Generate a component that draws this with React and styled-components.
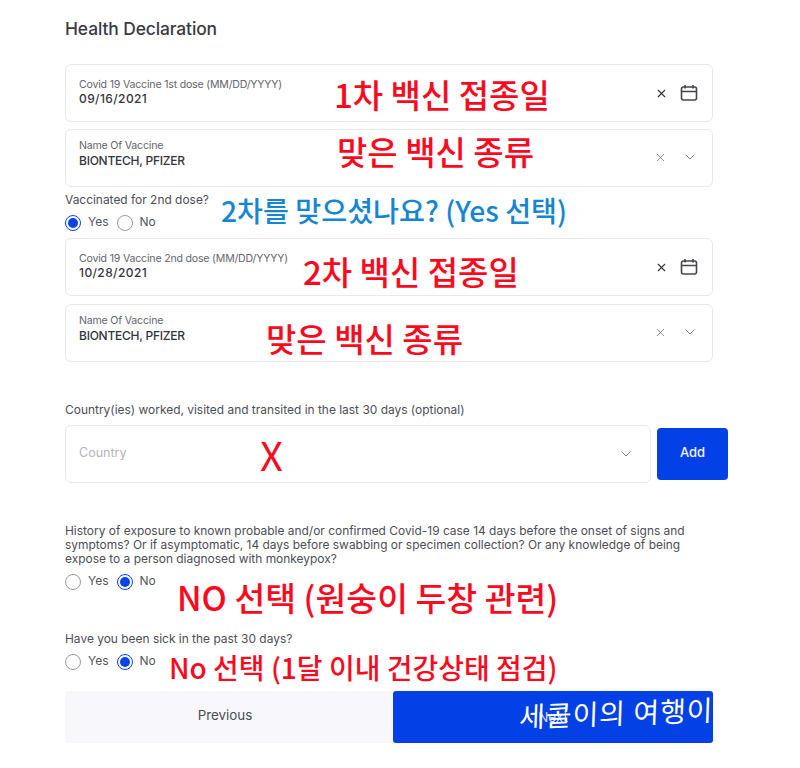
import React from 'react';
import styled, { createGlobalStyle } from 'styled-components';
import { X, ChevronDown } from 'lucide-react';

const GlobalStyle = createGlobalStyle`
  html, body {
    margin: 0;
    background: #fff;
    font-family: Inter, "Noto Sans CJK KR", sans-serif;
    color: #3c3c46;
  }
`;

const Page = styled.div`
  position: relative;
  width: 800px;
  height: 768px;
  overflow: hidden;
  box-sizing: border-box;
  padding: 19px 72px 0 65px;
  display: flex;
  flex-direction: column;
`;

const Title = styled.h2`
  margin: 0 0 26px;
  height: 19px;
  line-height: 19px;
  font-size: 17.4px;
  font-weight: 500;
  letter-spacing: -0.1px;
  color: #3a3a44;
`;

const Field = styled.div`
  box-sizing: border-box;
  width: ${(p) => p.$width || 648}px;
  height: 58px;
  flex: none;
  margin-bottom: ${(p) => p.$gap ?? 7}px;
  padding: ${(p) => p.$top ?? 13}px 13px 0;
  display: flex;
  justify-content: space-between;
  background: #fff;
  border: 1px solid #e9e9ec;
  border-radius: 6px;
`;

const FieldText = styled.div`
  display: flex;
  flex-direction: column;
`;

const FieldLabel = styled.span`
  font-size: 10.6px;
  line-height: 13px;
  letter-spacing: -0.2px;
  color: #66666f;
`;

const FieldValue = styled.span`
  margin-top: ${(p) => p.$top || 0}px;
  font-size: 12px;
  line-height: 16px;
  font-weight: 500;
  letter-spacing: ${(p) => p.$spacing || '0'};
  color: #35353d;
`;

const Placeholder = styled.span`
  font-size: 12.5px;
  line-height: 28px;
  color: #b4b4ba;
`;

const Icons = styled.div`
  display: flex;
  align-items: center;
  gap: 12px;
  margin-top: ${(p) => p.$shift ?? 1}px;
  margin-right: 1px;
  height: 28px;
  color: ${(p) => p.$color || '#77777f'};
`;

const Question = styled.p`
  margin: ${(p) => p.$top || 0}px 0 0;
  font-size: 11.95px;
  line-height: 14.3px;
  color: #4e4e57;
  width: ${(p) => p.$width || 'auto'};
`;

const RadioRow = styled.div`
  display: flex;
  align-items: center;
  height: 20px;
  margin: ${(p) => p.$before ?? 6}px 0 ${(p) => p.$after ?? 5}px;
`;

const Dot = styled.span`
  box-sizing: border-box;
  width: 16px;
  height: 16px;
  border-radius: 50%;
  background: #fff;
  border: 1.5px solid ${(p) => (p.$on ? '#0a43e6' : '#9a9aa0')};
  display: flex;
  align-items: center;
  justify-content: center;
  &::after {
    content: '';
    display: ${(p) => (p.$on ? 'block' : 'none')};
    width: 10px;
    height: 10px;
    border-radius: 50%;
    background: #0a43e6;
  }
`;

const RadioText = styled.span`
  margin: -3px 8px 0 7px;
  font-size: 12px;
  color: #55555e;
`;

const CountryLabel = styled(Question)`
  margin: 41px 0 7px;
`;

const CountryRow = styled.div`
  display: flex;
  align-items: center;
  gap: 6px;
  width: 663px;
`;

const AddButton = styled.button`
  width: 71px;
  height: 52px;
  flex: none;
  border: none;
  border-radius: 4px;
  padding: 0 0 3px;
  background: #0340e6;
  color: #f2f5ff;
  font: 500 13px Inter, sans-serif;
`;

const Footer = styled.div`
  display: flex;
  width: 648px;
  height: 52px;
  margin-top: 19px;
`;

const PrevButton = styled.button`
  width: 328px;
  border: none;
  border-radius: 4px 0 0 4px;
  padding: 0 8px 3px 0;
  background: #f8f8fc;
  color: #4c4c55;
  font: 400 13.4px Inter, sans-serif;
`;

const NextButton = styled.button`
  width: 320px;
  border: none;
  border-radius: 3px;
  background: #0340e6;
  color: #d5ddfa;
  font: 400 13.4px Inter, sans-serif;
`;

// painted over the form, the screenshot has these notes added by hand
const Note = styled.span`
  position: absolute;
  left: ${(p) => p.$x}px;
  top: ${(p) => p.$y}px;
  font-family: "Noto Sans CJK KR", sans-serif;
  font-size: ${(p) => p.$size || 33}px;
  font-weight: ${(p) => p.$weight || 500};
  line-height: 1;
  white-space: nowrap;
  color: ${(p) => p.$color || '#fa0a1e'};
`;

const Watermark = styled(Note)`
  font-weight: 400;
  letter-spacing: 1px;
  color: #fff;
  transform: rotate(-2deg) skewX(-4deg);
`;

const CalendarIcon = () => (
  <svg width="18" height="18" viewBox="0 0 18 18" fill="none" stroke="#45454d" strokeWidth="1.6">
    <rect x="1.5" y="3" width="15" height="13" rx="2" />
    <path d="M1.5 7.5h15M5 1v3.5M13 1v3.5" />
  </svg>
);

const DateActions = () => (
  <Icons $color="#33333b">
    <X size={13} strokeWidth={2} />
    <CalendarIcon />
  </Icons>
);

const SelectActions = () => (
  <Icons $shift={4}>
    <X size={13} strokeWidth={1.5} />
    <ChevronDown size={16} strokeWidth={1.4} style={{ marginLeft: 3 }} />
  </Icons>
);

const Radios = ({ selected, before, after }) => (
  <RadioRow $before={before} $after={after}>
    <Dot $on={selected === 'yes'} />
    <RadioText>Yes</RadioText>
    <Dot $on={selected === 'no'} />
    <RadioText>No</RadioText>
  </RadioRow>
);

const App = () => {
  return (
    <Page>
      <GlobalStyle />
      <Title>Health Declaration</Title>
      <Field>
        <FieldText>
          <FieldLabel>Covid 19 Vaccine 1st dose (MM/DD/YYYY)</FieldLabel>
          <FieldValue $spacing="0.4px">09/16/2021</FieldValue>
        </FieldText>
        <DateActions />
      </Field>
      <Field $gap={6} $top={9}>
        <FieldText>
          <FieldLabel>Name Of Vaccine</FieldLabel>
          <FieldValue $top={1} $spacing="-0.25px">BIONTECH, PFIZER</FieldValue>
        </FieldText>
        <SelectActions />
      </Field>
      <Question>Vaccinated for 2nd dose?</Question>
      <Radios selected="yes" after={5} />
      <Field $gap={8}>
        <FieldText>
          <FieldLabel>Covid 19 Vaccine 2nd dose (MM/DD/YYYY)</FieldLabel>
          <FieldValue $spacing="0.4px">10/28/2021</FieldValue>
        </FieldText>
        <DateActions />
      </Field>
      <Field $gap={0} $top={9}>
        <FieldText>
          <FieldLabel>Name Of Vaccine</FieldLabel>
          <FieldValue $top={1} $spacing="-0.25px">BIONTECH, PFIZER</FieldValue>
        </FieldText>
        <SelectActions />
      </Field>
      <CountryLabel>Country(ies) worked, visited and transited in the last 30 days (optional)</CountryLabel>
      <CountryRow>
        <Field $width={586} $gap={0}>
          <Placeholder>Country</Placeholder>
          <Icons>
            <ChevronDown size={16} strokeWidth={1.4} style={{ marginRight: 2 }} />
          </Icons>
        </Field>
        <AddButton>Add</AddButton>
      </CountryRow>
      <Question $width="640px" $top={41}>
        History of exposure to known probable and/or confirmed Covid-19 case 14 days before the onset of signs and
        symptoms? Or if asymptomatic, 14 days before swabbing or specimen collection? Or any knowledge of being
        expose to a person diagnosed with monkeypox?
      </Question>
      <Radios selected="no" before={6} after={40} />
      <Question>Have you been sick in the past 30 days?</Question>
      <Radios selected="no" before={5} after={0} />
      <Footer>
        <PrevButton>Previous</PrevButton>
        <NextButton>Next</NextButton>
      </Footer>

      <Note $x={334} $y={78}>1차 백신 접종일</Note>
      <Note $x={337} $y={135}>맞은 백신 종류</Note>
      <Note $x={221} $y={196} $size={28.2} $color="#1486d2">2차를 맞으셨나요? (Yes 선택)</Note>
      <Note $x={303} $y={255}>2차 백신 접종일</Note>
      <Note $x={266} $y={322}>맞은 백신 종류</Note>
      <Note $x={260} $y={434} $size={40} $weight={400}>X</Note>
      <Note $x={177} $y={580} $size={33.5}>NO 선택 (원숭이 두창 관련)</Note>
      <Note $x={169} $y={653} $size={28}>No 선택 (1달 이내 건강상태 점검)</Note>
      <Watermark $x={519} $y={698} $size={28}>세콜이의 여행이</Watermark>
    </Page>
  );
};

export default App;
